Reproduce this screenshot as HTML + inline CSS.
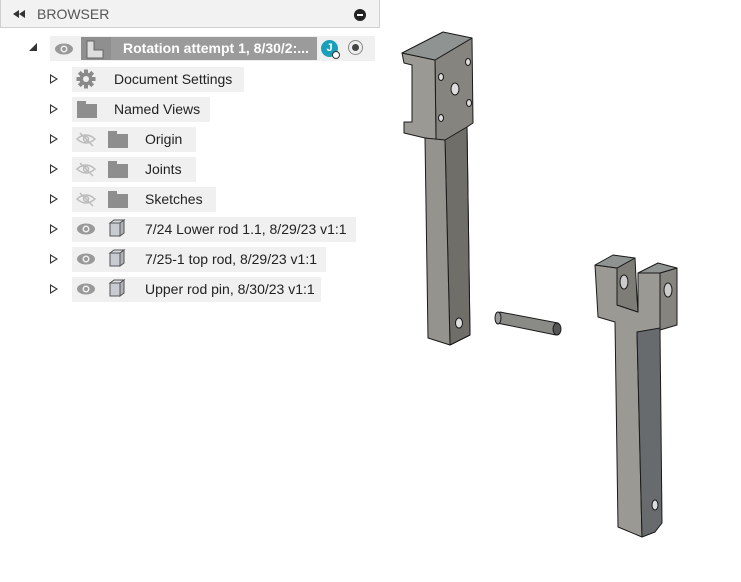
<!DOCTYPE html>
<html><head><meta charset="utf-8"><style>
body{margin:0;width:741px;height:582px;background:#fff;position:relative;overflow:hidden;font-family:"Liberation Sans",Arial,sans-serif;}
.hdr{position:absolute;left:0;top:0;width:378px;height:27px;background:#f2f2f2;border:1px solid #d0d0d0;border-top:none;}
.hdr .t{position:absolute;left:36px;top:6px;font-size:14px;color:#555;}
.row{position:absolute;height:25px;background:#f0f0f0;}
.lbl{position:absolute;font-size:14px;color:#222;top:4px;}
.tri{position:absolute;left:50px;width:0;height:0;border-left:8px solid #333;border-top:5px solid transparent;border-bottom:5px solid transparent;}
.tri:after{content:"";position:absolute;left:-7px;top:-3px;border-left:5px solid #fff;border-top:3px solid transparent;border-bottom:3px solid transparent;}
.fold{position:absolute;width:20px;height:14px;background:#8e8e8e;}
.fold:before{content:"";position:absolute;left:0;top:-3px;width:9px;height:3px;background:#8e8e8e;}
</style></head><body>
<div class="hdr"><svg style="position:absolute;left:12px;top:10px" width="12" height="8"><path d="M0 4L6 0V8Z M6 4L12 0V8Z" fill="#333"/></svg><span class="t">BROWSER</span>
<div style="position:absolute;left:353px;top:9px;width:12px;height:12px;border-radius:50%;background:#222"><div style="position:absolute;left:3px;top:5px;width:6px;height:2px;background:#fff"></div></div></div>

<div style="position:absolute;left:29px;top:43px;width:0;height:0;border-right:8px solid #333;border-top:8px solid transparent"></div>
<div class="row" style="left:50px;top:36px;width:325px;height:25px"></div>
<svg style="position:absolute;left:54px;top:42px" width="20" height="14"><ellipse cx="10" cy="7" rx="9" ry="5.5" fill="#999"/><circle cx="10" cy="7" r="3.5" fill="#f0f0f0"/><circle cx="10" cy="7" r="2" fill="#999"/></svg>
<div style="position:absolute;left:81px;top:37px;width:236px;height:23px;background:#9b9b9b"></div>
<div style="position:absolute;left:81px;top:37px;width:30px;height:23px;background:#8f8f8f"></div>
<svg style="position:absolute;left:85px;top:39px" width="20" height="20"><path d="M2 2h7v9h9v8H2z" fill="#ddd" stroke="#666"/></svg>
<div style="position:absolute;left:123px;top:40px;font-size:14px;font-weight:bold;color:#fff">Rotation attempt 1, 8/30/2:...</div>
<div style="position:absolute;left:321px;top:40px;width:17px;height:17px;border-radius:50%;background:#1a9fb8;color:#fff;font-size:11px;font-weight:bold;text-align:center;line-height:17px">J</div>
<div style="position:absolute;left:332px;top:51px;width:6px;height:6px;border-radius:50%;background:#fff;border:1px solid #333"></div>
<div style="position:absolute;left:348px;top:40px;width:15px;height:15px;border-radius:50%;background:#eee;border:1px solid #888;box-sizing:border-box"><div style="position:absolute;left:3px;top:3px;width:7px;height:7px;border-radius:50%;background:#444"></div></div>

<div class="tri" style="top:74px"></div><div class="row" style="left:72px;top:67px;width:172px"></div>
<svg style="position:absolute;left:76px;top:69px" width="20" height="20" viewBox="0 0 20 20"><g fill="#8a8a8a"><circle cx="10" cy="10" r="6.5"/><rect x="8" y="0.5" width="4" height="19"/><rect x="0.5" y="8" width="19" height="4"/><rect x="8" y="0.5" width="4" height="19" transform="rotate(45 10 10)"/><rect x="8" y="0.5" width="4" height="19" transform="rotate(-45 10 10)"/></g><circle cx="10" cy="10" r="3" fill="#f0f0f0"/></svg>
<div class="lbl" style="left:114px;top:71px">Document Settings</div>

<div class="tri" style="top:104px"></div><div class="row" style="left:72px;top:97px;width:138px"></div>
<div class="fold" style="left:77px;top:104px"></div>
<div class="lbl" style="left:114px;top:101px">Named Views</div>

<div class="tri" style="top:134px"></div><div class="row" style="left:72px;top:127px;width:124px"></div>
<div class="fold" style="left:108px;top:134px"></div>
<div class="lbl" style="left:145px;top:131px">Origin</div>

<div class="tri" style="top:164px"></div><div class="row" style="left:72px;top:157px;width:124px"></div>
<div class="fold" style="left:108px;top:164px"></div>
<div class="lbl" style="left:145px;top:161px">Joints</div>

<div class="tri" style="top:194px"></div><div class="row" style="left:72px;top:187px;width:144px"></div>
<div class="fold" style="left:108px;top:194px"></div>
<div class="lbl" style="left:145px;top:191px">Sketches</div>

<div class="tri" style="top:224px"></div><div class="row" style="left:72px;top:217px;width:284px"></div>
<div class="tri" style="top:254px"></div><div class="row" style="left:72px;top:247px;width:254px"></div>
<div class="tri" style="top:284px"></div><div class="row" style="left:72px;top:277px;width:249px"></div>
<div class="lbl" style="left:145px;top:221px">7/24 Lower rod 1.1, 8/29/23 v1:1</div>
<div class="lbl" style="left:145px;top:251px">7/25-1 top rod, 8/29/23 v1:1</div>
<div class="lbl" style="left:145px;top:281px">Upper rod pin, 8/30/23 v1:1</div>
<svg style="position:absolute;left:0;top:0" width="130" height="310">
<g fill="none" stroke="#bbb" stroke-width="1.5">
<path d="M77 139Q86 131 95 139Q86 147 77 139Z"/><circle cx="86" cy="139" r="2.5"/><path d="M80 133L93 146"/>
<path d="M77 169Q86 161 95 169Q86 177 77 169Z"/><circle cx="86" cy="169" r="2.5"/><path d="M80 163L93 176"/>
<path d="M77 199Q86 191 95 199Q86 207 77 199Z"/><circle cx="86" cy="199" r="2.5"/><path d="M80 193L93 206"/></g>
<g><ellipse cx="86" cy="229" rx="9" ry="5.5" fill="#999"/><circle cx="86" cy="229" r="3.5" fill="#f0f0f0"/><circle cx="86" cy="229" r="2" fill="#999"/>
<ellipse cx="86" cy="259" rx="9" ry="5.5" fill="#999"/><circle cx="86" cy="259" r="3.5" fill="#f0f0f0"/><circle cx="86" cy="259" r="2" fill="#999"/>
<ellipse cx="86" cy="289" rx="9" ry="5.5" fill="#999"/><circle cx="86" cy="289" r="3.5" fill="#f0f0f0"/><circle cx="86" cy="289" r="2" fill="#999"/></g>
<g stroke="#555" stroke-width="1" fill="#d8dbe0"><path d="M110 223l4-3h10l-4 3z"/><path d="M110 223h10v13h-10z" fill="#c8ccd2"/><path d="M120 223l4-3v13l-4 3z" fill="#aeb2b8"/>
<path d="M110 253l4-3h10l-4 3z"/><path d="M110 253h10v13h-10z" fill="#c8ccd2"/><path d="M120 253l4-3v13l-4 3z" fill="#aeb2b8"/>
<path d="M110 283l4-3h10l-4 3z"/><path d="M110 283h10v13h-10z" fill="#c8ccd2"/><path d="M120 283l4-3v13l-4 3z" fill="#aeb2b8"/></g>
</svg>

<svg style="position:absolute;left:0;top:0" width="741" height="582" stroke="#1a1a1a" stroke-width="1" stroke-linejoin="round">
<!-- left rod -->
<path d="M435 60L472 38L473 123L467 127L470 335L450 345L445 140L436 140Z" fill="#85847e"/>
<path d="M445 140L467 127L470 335L450 345Z" fill="#6f6e69"/>
<path d="M402 53L435 60L436 140L425 138L404 133L404 122L412 122L412 65L404 63Z" fill="#9a9993"/>
<path d="M425 138L445 140L450 345L428 338Z" fill="#94938d"/>
<path d="M402 53L443 32L472 38L435 60Z" fill="#8f9391"/>
<ellipse cx="455" cy="89" rx="4" ry="6" fill="#ddd"/><ellipse cx="441" cy="77" rx="2.5" ry="3.5" fill="#ddd"/><ellipse cx="468" cy="62" rx="2.5" ry="3.5" fill="#ddd"/><ellipse cx="441" cy="118" rx="2.5" ry="3.5" fill="#ddd"/><ellipse cx="469" cy="103" rx="2.5" ry="3.5" fill="#ddd"/><ellipse cx="459" cy="323" rx="3.5" ry="5" fill="#ddd"/>
<!-- pin -->
<path d="M500 312L558 323L556 335L497 323Z" fill="#8a8a86"/>
<ellipse cx="557" cy="329" rx="4" ry="6" fill="#555"/>
<ellipse cx="498" cy="318" rx="3" ry="6" fill="#999"/>
<!-- right rod -->
<path d="M595 265L617 268L617 305L638 312L638 273L660 273L660 330L637 332L642 537L618 527L615 322L598 317Z" fill="#9a9993"/>
<path d="M617 268L635 258L637 298L638 312L617 305Z" fill="#7d7c76"/>
<path d="M637 332L660 328L662 523L655 532L642 537Z" fill="#676b6d"/>
<path d="M660 273L677 268L677 325L660 330Z" fill="#85847e"/>
<path d="M595 265L613 255L635 258L617 268Z" fill="#8f9391"/>
<path d="M638 273L658 263L677 268L660 273Z" fill="#8f9391"/>
<ellipse cx="624" cy="282" rx="4" ry="7" fill="#ccc"/><ellipse cx="668" cy="290" rx="4" ry="7" fill="#ccc"/>
<ellipse cx="655" cy="505" rx="3" ry="5" fill="#ddd"/>
</svg>
</body></html>
